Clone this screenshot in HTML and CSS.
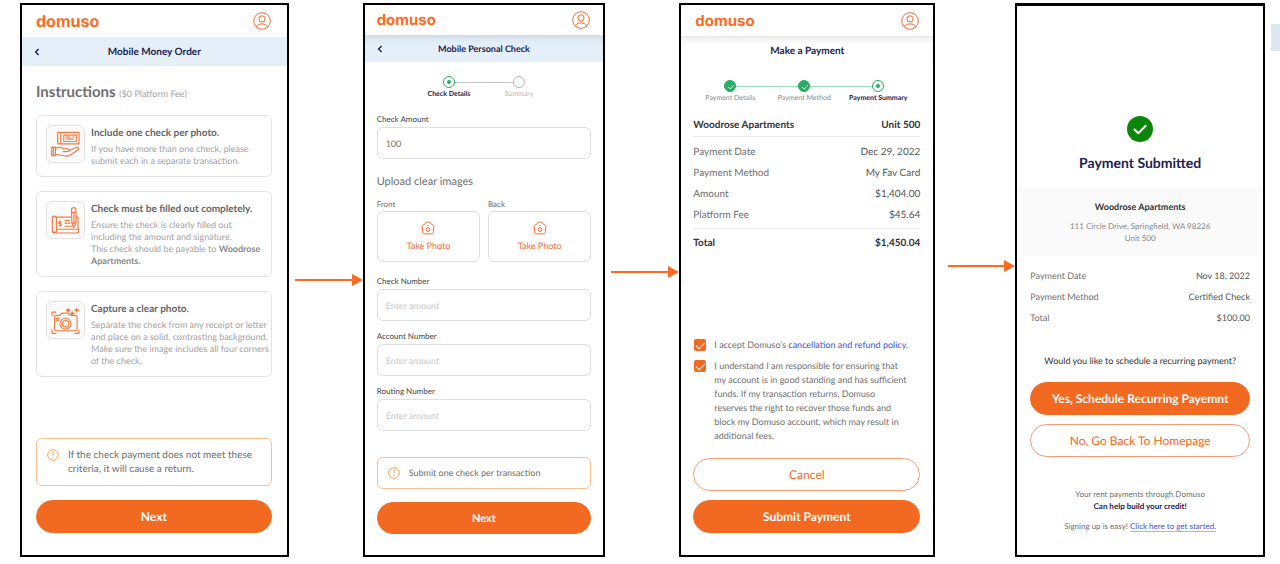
FILE: index.html
```html
<!DOCTYPE html>
<html lang="en">

<head>
    <meta charset="UTF-8">
    <meta name="viewport" content="width=device-width, initial-scale=1.0">
    <title>Domuso payment flow</title>
    <link rel="stylesheet" href="styles.css">
</head>

<body>
    <!-- shared icons -->
    <svg class="sprite" aria-hidden="true">
        <symbol id="user" viewBox="0 0 18 18">
            <circle cx="9" cy="9" r="8.3" />
            <circle cx="9" cy="6.9" r="3.1" />
            <path d="M3.6 15.2C4 12.7 6 11.9 9 11.9s5 .8 5.4 3.3" />
        </symbol>
        <symbol id="back" viewBox="0 0 6 8">
            <path d="M4.6 1 1.6 4l3 3" />
        </symbol>
        <symbol id="alert" viewBox="0 0 12 12">
            <circle cx="6" cy="6" r="5.3" />
            <path d="M6 3v3.6M6 8.1v1" />
        </symbol>
        <symbol id="camera" viewBox="0 0 14 14">
            <path d="M1.2 5.2c0-1 .6-1.4 1.5-1.5.9-.1 1.2-.5 1.5-1.3.3-.9.9-1.3 1.8-1.3h2c.9 0 1.5.4 1.8 1.3.3.8.6 1.2 1.5 1.3.9.1 1.5.5 1.5 1.5l-.4 5.6c-.1 1.4-.8 2.1-2.2 2.1H3.8c-1.4 0-2.1-.7-2.2-2.1z" />
            <circle cx="7" cy="8.6" r="1.9" />
            <path d="M6.3 4.6h1.4" />
        </symbol>
        <symbol id="check" viewBox="0 0 12 12">
            <path d="M3.4 6.2 5.3 8l3.4-3.7" />
        </symbol>
    </svg>

    <main class="board">
        <section class="screen screen-order">
            <header class="topbar">
                <span class="logo">domuso</span>
                <button type="button" class="icon-btn" aria-label="Account"><svg class="user"><use href="#user" /></svg></button>
            </header>
            <div class="titlebar blue">
                <button type="button" class="icon-btn" aria-label="Back"><svg class="back"><use href="#back" /></svg></button>
                <h1>Mobile Money Order</h1>
            </div>
            <div class="content">
                <h2 class="instructions">Instructions <small>($0 Platform Fee)</small></h2>

                <article class="tip">
                    <div class="tip-icon">
                        <svg viewBox="0 0 86 76">
                            <path d="M20 2h63v34H20zM29 2v34M38 10h37v19H38zM45 16h13M45 22h22M64 16h5" />
                            <path d="M2 46h11v25H2zM7 46v25M13 49c9-4 17-3 25 2h11c7 0 7 8 0 8H35M54 56l21-9c7-2 10 4 4 8L56 70c-5 3-9 3-14 2l-29-5" />
                        </svg>
                    </div>
                    <div>
                        <h3>Include one check per photo.</h3>
                        <p>If you have more than one check, please submit each in a separate transaction.</p>
                    </div>
                </article>

                <article class="tip">
                    <div class="tip-icon">
                        <svg viewBox="0 0 82 80">
                            <path d="M58 30H14v38M14 68V34c0-9-12-9-12 0v36c0 4 3 7 7 7h64c4 0 7-3 7-7v-4H16c0 12-14 12-14 2M72 30h6v36" />
                            <path d="M59 16 60 48l6 13 6-13V16zM59 16V8c0-8 13-8 13 0v8M66 17v29M61 48h10M38 40h16M38 48h18M38 57h24" />
                            <path d="M28 43h-4c-4 0-4 6 0 6h1c4 0 4 6 0 6h-4M25 40v18" />
                        </svg>
                    </div>
                    <div>
                        <h3>Check must be filled out completely.</h3>
                        <p>Ensure the check is clearly filled out<br>including the amount and signature.<br>This check should be payable to <b>Woodrose</b> <b>Apartments.</b></p>
                    </div>
                </article>

                <article class="tip">
                    <div class="tip-icon">
                        <svg viewBox="0 0 88 84">
                            <path d="M2 28V16h13M2 70v12h14M86 70v12H72" />
                            <path d="M10 32c0-4 2-6 6-6h10l6-7h20l7 7h15c4 0 6 2 6 6v36c0 4-2 6-6 6H16c-4 0-6-2-6-6z" />
                            <circle cx="44" cy="52" r="17" />
                            <circle cx="44" cy="52" r="10" />
                            <circle cx="19" cy="38" r="4" />
                            <path class="spark" d="m52 2 3 5 6 3-6 3-3 5-3-5-6-3 6-3zM79 2l3 5 6 3-6 3-3 5-3-5-6-3 6-3zM65 12l3 5 6 3-6 3-3 5-3-5-6-3 6-3z" />
                        </svg>
                    </div>
                    <div>
                        <h3>Capture a clear photo.</h3>
                        <p>Separate the check from any receipt or letter and place on a solid, contrasting background. Make sure the image includes all four corners of the check.</p>
                    </div>
                </article>

                <div class="notice">
                    <svg><use href="#alert" /></svg>
                    <p>If the check payment does not meet these criteria, it will cause a return.</p>
                </div>
                <button type="button" class="btn primary">Next</button>
            </div>
        </section>

        <div class="arrow arrow-one"></div>

        <section class="screen screen-check">
            <header class="topbar">
                <span class="logo">domuso</span>
                <button type="button" class="icon-btn" aria-label="Account"><svg class="user"><use href="#user" /></svg></button>
            </header>
            <div class="titlebar blue shadow">
                <button type="button" class="icon-btn" aria-label="Back"><svg class="back"><use href="#back" /></svg></button>
                <h1>Mobile Personal Check</h1>
            </div>
            <form class="content">
                <ol class="steps">
                    <li class="current"><span class="track"><i class="dot"></i></span>Check Details</li>
                    <li class="todo"><span class="track"><i class="dot"></i></span>Summary</li>
                </ol>

                <div class="field">
                    <label for="amount">Check Amount</label>
                    <input type="text" id="amount" value="100">
                </div>

                <h2 class="upload-title">Upload clear images</h2>
                <div class="photos">
                    <div class="photo">
                        <span id="front">Front</span>
                        <button type="button" aria-describedby="front"><svg><use href="#camera" /></svg>Take Photo</button>
                    </div>
                    <div class="photo">
                        <span id="rear">Back</span>
                        <button type="button" aria-describedby="rear"><svg><use href="#camera" /></svg>Take Photo</button>
                    </div>
                </div>

                <div class="field">
                    <label for="check-number">Check Number</label>
                    <input type="text" id="check-number" placeholder="Enter amount">
                </div>
                <div class="field">
                    <label for="account-number">Account Number</label>
                    <input type="text" id="account-number" placeholder="Enter amount">
                </div>
                <div class="field">
                    <label for="routing-number">Routing Number</label>
                    <input type="text" id="routing-number" placeholder="Enter amount">
                </div>

                <div class="notice">
                    <svg><use href="#alert" /></svg>
                    <p>Submit one check per transaction</p>
                </div>
                <button type="button" class="btn primary">Next</button>
            </form>
        </section>

        <div class="arrow arrow-two"></div>

        <section class="screen screen-payment">
            <header class="topbar">
                <span class="logo">domuso</span>
                <button type="button" class="icon-btn" aria-label="Account"><svg class="user"><use href="#user" /></svg></button>
            </header>
            <div class="titlebar shadow">
                <h1>Make a Payment</h1>
            </div>
            <form class="content">
                <ol class="steps">
                    <li class="done"><span class="track"><i class="dot"><svg><use href="#check" /></svg></i></span>Payment Details</li>
                    <li class="done"><span class="track"><i class="dot"><svg><use href="#check" /></svg></i></span>Payment Method</li>
                    <li class="current"><span class="track"><i class="dot"></i></span>Payment Summary</li>
                </ol>

                <table class="summary">
                    <thead>
                        <tr><th>Woodrose Apartments</th><th>Unit 500</th></tr>
                    </thead>
                    <tbody>
                        <tr><td>Payment Date</td><td>Dec 29, 2022</td></tr>
                        <tr><td>Payment Method</td><td>My Fav Card</td></tr>
                        <tr><td>Amount</td><td>$1,404.00</td></tr>
                        <tr><td>Platform Fee</td><td>$45.64</td></tr>
                    </tbody>
                    <tfoot>
                        <tr><th>Total</th><th>$1,450.04</th></tr>
                    </tfoot>
                </table>

                <div class="agree">
                    <input type="checkbox" id="policy" checked>
                    <label for="policy">I accept Domuso’s <a href="#">cancellation and refund policy</a>.</label>
                </div>
                <div class="agree">
                    <input type="checkbox" id="funds" checked>
                    <label for="funds">I understand I am responsible for ensuring that<br>my account is in good standing and has sufficient<br>funds. If my transaction returns, Domuso<br>reserves the right to recover those funds and<br>block my Domuso account, which may result in<br>additional fees.</label>
                </div>

                <button type="button" class="btn outline">Cancel</button>
                <button type="button" class="btn primary">Submit Payment</button>
            </form>
        </section>

        <div class="arrow arrow-three"></div>

        <section class="screen screen-done">
            <svg class="success" viewBox="0 0 26 26">
                <circle cx="13" cy="13" r="13" />
                <path d="m7.5 13.5 3.8 3.8 7.4-7.6" />
            </svg>
            <h1>Payment Submitted</h1>
            <address>
                <b>Woodrose Apartments</b>
                111 Circle Drive, Springfield, WA 98226<br>Unit 500
            </address>
            <div class="content">
                <table class="summary">
                    <tbody>
                        <tr><td>Payment Date</td><td>Nov 18, 2022</td></tr>
                        <tr><td>Payment Method</td><td>Certified Check</td></tr>
                        <tr><td>Total</td><td>$100.00</td></tr>
                    </tbody>
                </table>
                <p class="question">Would you like to schedule a recurring payment?</p>
                <button type="button" class="btn primary">Yes, Schedule Recurring Payemnt</button>
                <button type="button" class="btn outline">No, Go Back To Homepage</button>
                <p class="credit">Your rent payments through Domuso<br><b>Can help build your credit!</b></p>
                <p class="signup">Signing up is easy! <a href="#">Click here to get started.</a></p>
            </div>
        </section>

        <div class="next-screen"></div>
    </main>
</body>

</html>
```
FILE: styles.css
```css
* {
    box-sizing: border-box;
}

body {
    margin: 0;
    background: #fff;
    color: #6f6f6f;
    font-family: Lato, "Liberation Sans", sans-serif;
    font-size: 10px;
    line-height: 14px;
    text-rendering: geometricPrecision;
}

h1, h2, h3, p, ol {
    margin: 0;
    padding: 0;
}

button, input {
    font-family: inherit;
    font-size: inherit;
    text-rendering: inherit;
}

a {
    color: #4253d8;
    text-decoration: none;
}

svg {
    display: block;
    fill: none;
    stroke: currentColor;
    flex: none;
}

.sprite {
    display: none;
}

/* board */
.board {
    display: grid;
    grid-template-columns: 269fr 74px 243fr 74px 255fr 80px 250fr 15px;
    min-height: 100vh;
    padding: 3px 0 7px 20px;
}

.screen {
    display: flex;
    flex-direction: column;
    border: 2px solid #000;
    background: #fff;
}

.content {
    flex: 1;
    display: flex;
    flex-direction: column;
    padding: 0 12px 22px;
}

.arrow {
    display: flex;
    align-items: center;
    align-self: start;
    height: 12px;
}

.arrow::before {
    content: "";
    flex: 1;
    height: 2px;
    background: #ff6a1f;
}

.arrow::after {
    content: "";
    border-left: 11px solid #ff6a1f;
    border-top: 6px solid transparent;
    border-bottom: 6px solid transparent;
}

.arrow-one {
    margin: 271px 0 0 6px;
}

.arrow-two {
    margin: 263px 0 0 6px;
}

.arrow-three {
    margin: 257px 0 0 13px;
}

.next-screen {
    height: 27px;
    margin: 21px 0 0 6px;
    background: #dde8f1;
}

/* header */
.topbar {
    display: flex;
    align-items: center;
    justify-content: space-between;
    height: 31px;
    padding: 0 14px;
}

.logo {
    color: #ff6a1f;
    font-family: Inter, sans-serif;
    font-size: 15px;
    font-weight: 700;
}

.icon-btn {
    padding: 0;
    border: 0;
    background: none;
    color: #f26a35;
}

.user {
    width: 18px;
    height: 18px;
}

.back {
    width: 6px;
    height: 8px;
    color: #1b2150;
    stroke-width: 1.4;
}

.titlebar {
    display: grid;
    grid-template-columns: 12px 1fr 12px;
    align-items: center;
    height: 28px;
    padding: 0 12px;
}

.titlebar h1 {
    grid-column: 2;
    color: #1b2150;
    font-size: 10px;
    text-align: center;
}

.blue {
    background: #e5effa;
}

.shadow {
    box-shadow: inset 0 8px 8px -6px rgba(0, 0, 0, 0.12);
}

/* buttons and notices */
.btn {
    height: 33px;
    border: 1px solid #f26a22;
    border-radius: 17px;
    font-size: 12px;
}

.btn + .btn {
    margin-top: 9px;
}

.primary {
    background: #f26a22;
    color: #fff;
    font-weight: 700;
}

.outline {
    border-color: #f79b70;
    background: #fff;
    color: #f26a22;
}

.notice {
    display: flex;
    margin: auto 0 14px;
    padding: 9px 10px;
    border: 1px solid #f9c08a;
    border-radius: 6px;
}

.notice svg {
    width: 12px;
    height: 12px;
    margin: 1px 9px 0 0;
    color: #f5a04f;
}

/* money order */
.screen-order .topbar {
    height: 32px;
    padding: 0 16px 0 14px;
}

.screen-order .logo {
    font-size: 16px;
}

.screen-order .titlebar {
    height: 29px;
}

.screen-order .content {
    padding: 0 15px 22px 14px;
}

.instructions {
    margin: 16px 0 11px;
    font-size: 15px;
    line-height: 20px;
}

.instructions small {
    color: #a3a3a3;
    font-size: 9px;
    font-weight: 400;
}

.tip {
    display: flex;
    gap: 6px;
    margin-bottom: 14px;
    padding: 9px 0 9px 9px;
    border: 1px solid #e2e2e2;
    border-radius: 6px;
    color: #a3a3a3;
    font-size: 9px;
    line-height: 12px;
}

.tip h3 {
    margin-bottom: 2px;
    color: #666;
    font-size: 10px;
    line-height: 16px;
}

.tip b {
    color: #8a8a8a;
}

.tip-icon {
    display: grid;
    place-items: center;
    flex: none;
    width: 39px;
    height: 38px;
    border: 1px solid #e2e2e2;
    border-radius: 6px;
    background: #fbfbfb;
}

.tip-icon svg {
    width: 29px;
    height: 27px;
    color: #f5793f;
    stroke-width: 3.5;
    stroke-linejoin: round;
}

.tip-icon .spark {
    fill: currentColor;
    stroke: none;
}

/* steps */
.steps {
    display: flex;
    justify-content: center;
    list-style: none;
    color: #8a8a8a;
    font-size: 7px;
    line-height: 12px;
    text-align: center;
}

.steps li {
    width: 70px;
}

.track {
    display: flex;
    align-items: center;
}

.track::before,
.track::after {
    content: "";
    flex: 1;
    height: 1px;
    background: #c4c4c4;
}

.steps li:first-child .track::before,
.steps li:last-child .track::after {
    background: none;
}

.dot {
    display: grid;
    place-items: center;
    width: 12px;
    height: 12px;
    border: 1px solid #b5b5b5;
    border-radius: 50%;
}

.dot svg {
    width: 12px;
    height: 12px;
    color: #fff;
}

.current {
    color: #1b2150;
    font-weight: 700;
}

.current .dot {
    border-color: #27ae60;
}

.current .dot::before {
    content: "";
    width: 4px;
    height: 4px;
    border-radius: 50%;
    background: #27ae60;
}

.todo {
    color: #b5b5b5;
}

.done .dot {
    border-color: #27ae60;
    background: #27ae60;
}

/* personal check */
.screen-check .topbar {
    height: 30px;
    padding: 0 13px 0 12px;
}

.screen-check .titlebar {
    height: 27px;
}

.screen-check .titlebar h1 {
    font-size: 9px;
}

.screen-check .content {
    padding: 14px 12px 21px;
}

.screen-check .steps {
    margin-bottom: 13px;
}

.screen-check .btn {
    height: 32px;
    font-size: 11px;
}

.screen-check .notice {
    margin-bottom: 13px;
    padding: 8px 10px;
    font-size: 9px;
}

.field {
    display: flex;
    flex-direction: column;
    gap: 2px;
    margin-bottom: 9px;
    color: #555;
    font-size: 8px;
    font-weight: 500;
    line-height: 12px;
}

.field input {
    width: 100%;
    height: 32px;
    padding: 0 8px;
    border: 1px solid #dedede;
    border-radius: 6px;
    color: #6f6f6f;
    font-size: 9px;
}

.field input::placeholder {
    color: #c8c8c8;
}

.upload-title {
    margin: 6px 0 8px;
    font-size: 11px;
    font-weight: 400;
    line-height: 16px;
}

.photos {
    display: flex;
    gap: 8px;
    margin-bottom: 13px;
}

.photo {
    flex: 1;
    font-size: 8px;
    line-height: 12px;
}

.photo button {
    display: flex;
    flex-direction: column;
    align-items: center;
    justify-content: center;
    gap: 4px;
    width: 100%;
    height: 51px;
    margin-top: 1px;
    border: 1px solid #dedede;
    border-radius: 6px;
    background: #fff;
    color: #f26a35;
    font-size: 9px;
    line-height: 14px;
}

.photo svg {
    width: 14px;
    height: 14px;
}

/* payment summary */
.screen-payment .titlebar {
    height: 29px;
}

.screen-payment .content {
    padding: 15px 13px 22px 12px;
}

.screen-payment .steps {
    margin: 0 5px 10px 0;
}

.screen-payment .steps li {
    width: 74px;
}

.screen-payment .track::before,
.screen-payment .track::after {
    background: #9bdcb6;
}

.summary {
    width: 100%;
    border-collapse: collapse;
}

.summary th,
.summary td {
    height: 21px;
    padding: 0;
    text-align: left;
}

.summary th:last-child,
.summary td:last-child {
    color: #555;
    text-align: right;
}

.summary th,
.summary th:last-child {
    height: 22px;
    color: #333;
}

.summary thead {
    border-bottom: 1px solid #ebebeb;
}

.summary tbody::before {
    content: "";
    display: block;
    height: 5px;
}

.summary tbody::after {
    content: "";
    display: block;
    height: 2px;
}

.summary tfoot {
    border-top: 1px solid #ebebeb;
}

.summary tfoot th {
    height: 30px;
}

.agree {
    display: flex;
    gap: 8px;
    margin: 0 0 7px 1px;
    font-size: 9px;
}

.agree:last-of-type {
    margin-bottom: 15px;
}

.summary + .agree {
    margin-top: auto;
}

.agree input {
    appearance: none;
    display: grid;
    place-items: center;
    flex: none;
    width: 12px;
    height: 12px;
    margin: 1px 0 0;
    border-radius: 2px;
    background: #f26a22;
}

.agree input:checked::before {
    content: "";
    width: 4px;
    height: 8px;
    margin-bottom: 2px;
    border: solid #fff;
    border-width: 0 1px 1px 0;
    transform: rotate(45deg);
}

/* payment submitted */
.screen-done {
    border-top-width: 3px;
    text-align: center;
}

.screen-done h1 {
    margin: 11px 0 15px;
    color: #1b2150;
    font-size: 14px;
    line-height: 20px;
}

.success {
    width: 26px;
    height: 26px;
    margin: 110px auto 0;
    color: #fff;
    stroke-width: 2;
    stroke-linecap: round;
    stroke-linejoin: round;
}

.success circle {
    fill: #0a870a;
    stroke: none;
}

address {
    padding: 12px 0;
    background: #fafafa;
    color: #8a8a8a;
    font-size: 8px;
    font-style: normal;
    line-height: 12px;
}

address b {
    display: block;
    margin-bottom: 6px;
    color: #333;
    font-size: 9px;
    line-height: 14px;
}

.screen-done .content {
    padding: 4px 13px 22px;
}

.screen-done .summary {
    font-size: 9px;
}

.question {
    margin: 24px 0 14px;
    color: #333;
    font-size: 9px;
}

.credit {
    margin: auto 0 7px;
    font-size: 8px;
    line-height: 12px;
}

.credit b {
    color: #1b2150;
}

.signup {
    font-size: 8px;
}

.signup a {
    border-bottom: 1px solid #a9b2f0;
}
```
